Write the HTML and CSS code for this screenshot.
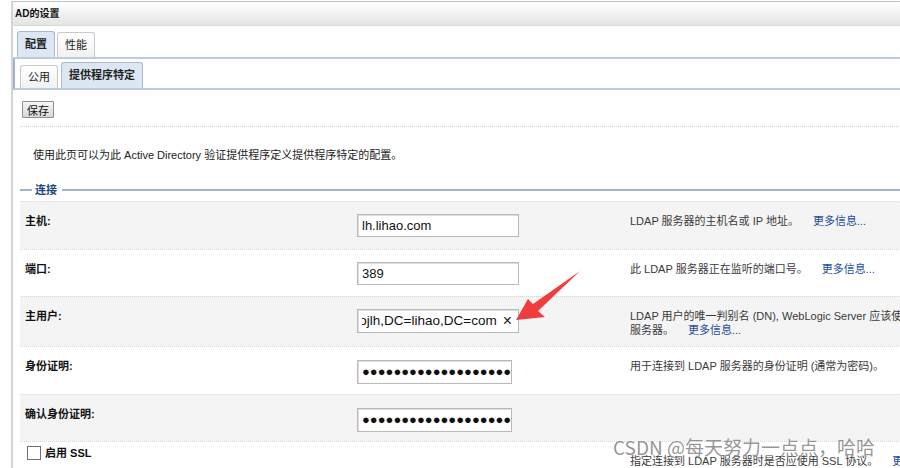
FILE: index.html
```html
<!DOCTYPE html>
<html lang="zh-CN">
<head>
  <meta charset="UTF-8">
  <title>AD的设置</title>
  <link rel="stylesheet" href="styles.css">
</head>
<body>
  <div class="panel">
    <div class="panel-head">AD的设置</div>

    <div class="tabs tabs-main">
      <span class="tab active">配置</span>
      <span class="tab">性能</span>
    </div>
    <div class="tabs tabs-sub">
      <span class="tab">公用</span>
      <span class="tab active">提供程序特定</span>
    </div>

    <div class="content">
      <div class="toolbar"><button class="btn">保存</button></div>

      <p class="intro">使用此页可以为此 Active Directory 验证提供程序定义提供程序特定的配置。</p>

      <fieldset class="group">
        <legend>连接</legend>

        <div class="row shade">
          <label>主机:</label>
          <div class="field"><input class="text" type="text" value="lh.lihao.com"></div>
          <div class="help">LDAP 服务器的主机名或 IP 地址。<a href="#">更多信息...</a></div>
        </div>

        <div class="row">
          <label>端口:</label>
          <div class="field"><input class="text" type="text" value="389"></div>
          <div class="help">此 LDAP 服务器正在监听的端口号。<a href="#">更多信息...</a></div>
        </div>

        <div class="row shade tall">
          <label>主用户:</label>
          <div class="field">
            <div class="text scrolled">
              <span class="view"><span class="tail">ojlh,DC=lihao,DC=com</span></span>
              <span class="clear">×</span>
            </div>
          </div>
          <div class="help">LDAP 用户的唯一判别名 (DN), WebLogic Server 应该使用该判别名连接到 LDAP<br>服务器。<a href="#">更多信息...</a></div>
        </div>

        <div class="row">
          <label>身份证明:</label>
          <div class="field"><div class="text secret"><span>●●●●●●●●●●●●●●●●●●●●●●</span></div></div>
          <div class="help">用于连接到 LDAP 服务器的身份证明 (通常为密码)。</div>
        </div>

        <div class="row shade">
          <label>确认身份证明:</label>
          <div class="field"><div class="text secret"><span>●●●●●●●●●●●●●●●●●●●●●●</span></div></div>
          <div class="help"></div>
        </div>

        <div class="row check-row">
          <label class="check"><span class="box"></span>启用 SSL</label>
          <div class="field"></div>
          <div class="help">指定连接到 LDAP 服务器时是否应使用 SSL 协议。<a href="#">更多信息...</a></div>
        </div>
      </fieldset>
    </div>
  </div>

  <!-- 截图上的标注 -->
  <svg class="arrow" width="80" height="60" viewBox="0 0 80 60">
    <polygon points="6,55 18,34 23,39 70,6 28,46 35,52" fill="#f03c3c"/>
  </svg>
  <div class="watermark">CSDN @每天努力一点点，哈哈</div>
</body>
</html>
```

FILE: styles.css
```css
body {
  margin: 0;
  width: 900px;
  height: 468px;
  overflow: hidden;
  position: relative;
  background: #fff;
  font-family: "Liberation Sans", "Noto Sans CJK SC", sans-serif;
  font-size: 11px;
  color: #222;
}

.panel {
  margin: 1px 0 0 11px;
  width: 1100px;
  height: 470px;
  border-left: 2px solid #d4d4d4;
  border-top: 1px solid #bfc3c1;
}

.panel-head {
  height: 23px;
  line-height: 23px;
  padding-left: 2px;
  font-size: 10px;
  font-weight: bold;
  color: #111;
  background: linear-gradient(#ffffff, #e3e5e3);
  border-bottom: 1px solid #d5dad5;
}

/* 选项卡 */
.tabs {
  display: flex;
  align-items: flex-end;
  border-bottom: 2px solid #bccbdd;
}
.tabs-main {
  padding: 5px 0 0 4px;
  gap: 2px;
}
.tabs-sub {
  padding: 3px 0 0 5px;
  gap: 3px;
  border-left: 2px solid #9cb2cf;
}
.tab {
  height: 24px;
  line-height: 24px;
  padding: 0 7px;
  border: 1px solid #c9c9c9;
  border-bottom: none;
  border-radius: 3px 3px 0 0;
  background: linear-gradient(#ffffff, #f1f1f1);
  color: #222;
}
.tabs-sub .tab {
  height: 22px;
  line-height: 22px;
}
.tab.active {
  height: 25px;
  line-height: 25px;
  font-weight: bold;
  background: #dce7f3;
  border-color: #a6bad4;
}
.tabs-sub .tab.active {
  height: 25px;
}

.content {
  padding-left: 7px;
}

.toolbar {
  padding: 11px 0 8px 2px;
  border-bottom: 1px dotted #cfcfcf;
}
.btn {
  display: block;
  height: 17px;
  padding: 0 4px;
  font-family: inherit;
  font-size: 11px;
  color: #111;
  background: linear-gradient(#f6f6f6, #d9d9d9);
  border: 1px solid #8e8e8e;
  border-radius: 1px;
}

.intro {
  margin: 0;
  padding: 21px 0 0 13px;
  line-height: 14px;
}

/* 连接 */
.group {
  margin: 21px 0 0 0;
  padding: 4px 0 0;
  border: 0;
  border-top: 2px solid #9fb3d0;
  min-width: 0;
}
.group legend {
  margin-left: 12px;
  padding: 0 5px 0 3px;
  line-height: 14px;
  font-weight: bold;
  color: #23467f;
}

.row {
  display: grid;
  grid-template-columns: 332px 273px 1fr;
  box-sizing: border-box;
  min-height: 47.5px;
  padding: 12px 0 8px 5px;
  border-top: 1px dotted #d6d6d6;
}
.row.shade {
  background: #f4f4f4;
}
.row.tall {
  min-height: 50px;
}
.row label {
  line-height: 14px;
  font-weight: bold;
  color: #111;
}

.help {
  line-height: 14px;
  white-space: nowrap;
  color: #3a3a3a;
}
.help a {
  margin-left: 14px;
  color: #1c4d9e;
  text-decoration: none;
}

.text {
  display: block;
  box-sizing: border-box;
  width: 162px;
  height: 23px;
  margin: 0;
  padding: 0 4px;
  font-family: "Liberation Sans", sans-serif;
  font-size: 13px;
  line-height: 21px;
  color: #111;
  background: #fff;
  border: 1px solid #b9b9b9;
  box-shadow: inset 1px 1px 0 #dedede;
  outline: none;
}
.scrolled {
  height: 24px;
  display: flex;
  padding-right: 6px;
  white-space: nowrap;
}
.scrolled .view {
  flex: 1;
  display: flex;
  justify-content: flex-end;
  overflow: hidden;
  padding-right: 6px;
}
.scrolled .tail {
  flex-shrink: 0;
  font-size: 13.5px;
}
.scrolled .clear {
  font-size: 16px;
  color: #222;
}
.secret {
  width: 155px;
  height: 24px;
  margin-top: 1px;
  white-space: nowrap;
  overflow: hidden;
  line-height: 22px;
}

.check-row {
  padding-top: 12px;
}
.check {
  display: flex;
  align-items: center;
  gap: 4px;
  margin-top: -9px;
  height: 16px;
}
.box {
  display: inline-block;
  width: 12px;
  height: 12px;
  margin-left: 2px;
  border: 1px solid #6f6f6f;
  background: #fff;
}

/* 标注 */
.arrow {
  position: absolute;
  left: 510px;
  top: 265px;
}
.watermark {
  position: absolute;
  left: 613px;
  top: 436px;
  font-family: "Noto Sans CJK SC", sans-serif;
  font-size: 19px;
  line-height: 22px;
  color: rgba(115, 115, 115, 0.75);
  text-shadow: 0 0 1px #fff;
  white-space: nowrap;
}
```
